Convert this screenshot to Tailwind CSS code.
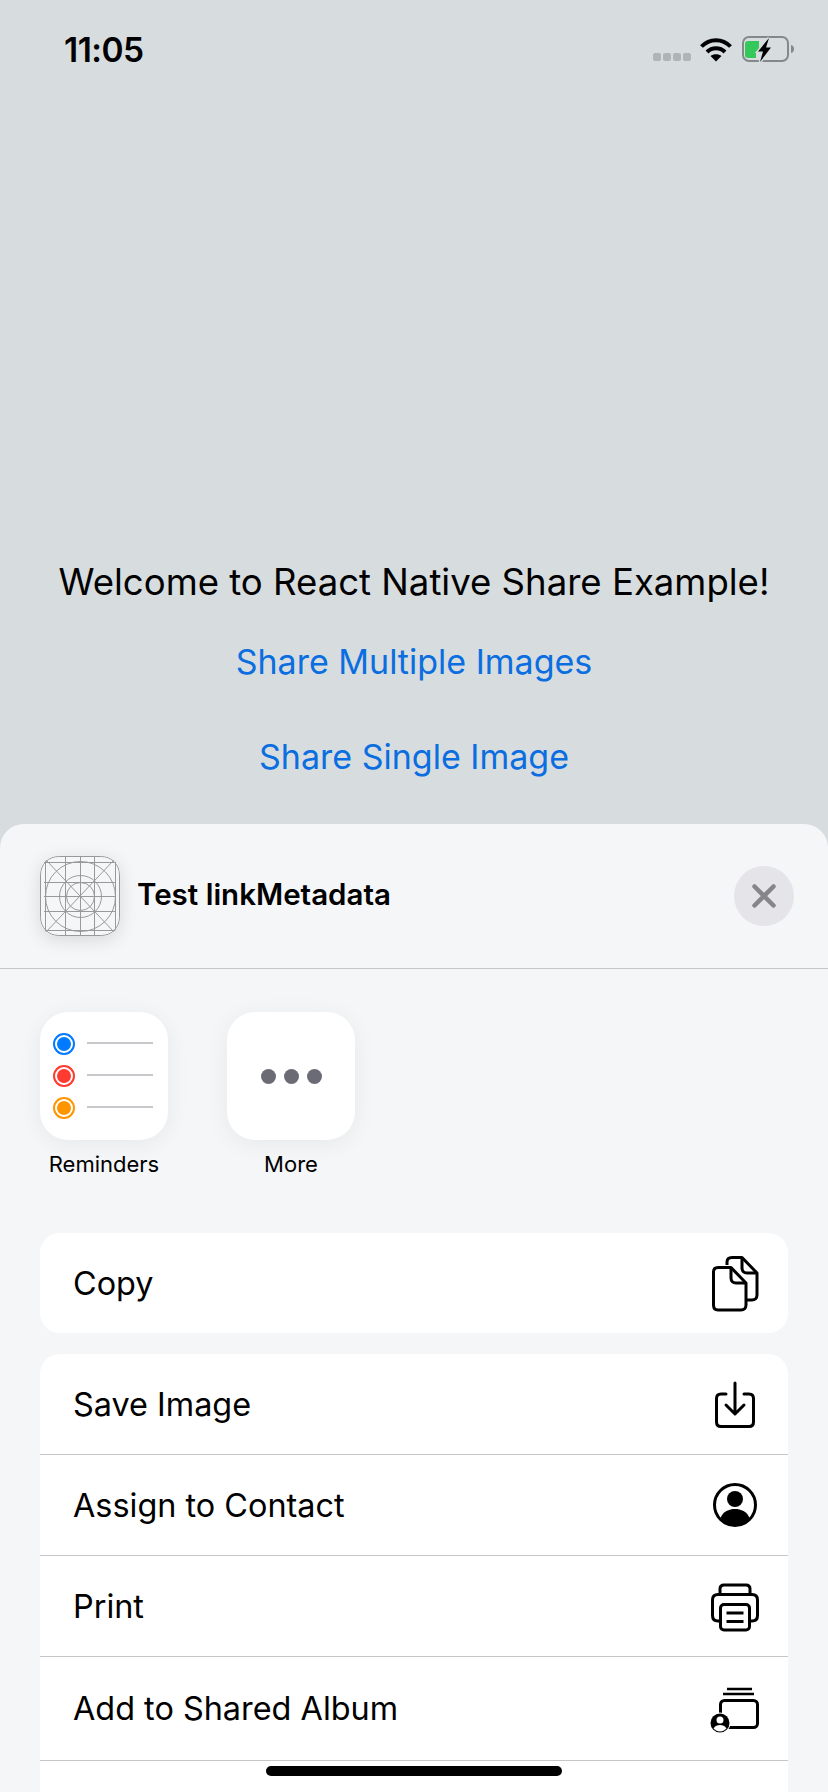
<!doctype html>
<html>
<head>
<meta charset="utf-8">
<meta name="viewport" content="width=device-width, initial-scale=1">
<script src="https://cdn.jsdelivr.net/npm/@tailwindcss/browser@4"></script>
</head>
<body class="m-0">
<div class="relative w-[828px] h-[1792px] overflow-hidden bg-[#d7dcdf] font-['Inter',sans-serif] text-black flex flex-col">

  <!-- status bar -->
  <div class="h-[100px] shrink-0 flex items-start justify-between pt-[30px] pl-[64px] pr-[34px]">
    <span class="text-[33.500px] leading-[40px] font-semibold tracking-[-0.5px]">11:05</span>
    <div class="flex items-start">
      <div class="flex gap-[2px] mt-[23px] mr-[9px]">
        <span class="w-[8px] h-[8px] rounded-[2px] bg-[#afb4b6]"></span>
        <span class="w-[8px] h-[8px] rounded-[2px] bg-[#afb4b6]"></span>
        <span class="w-[8px] h-[8px] rounded-[2px] bg-[#afb4b6]"></span>
        <span class="w-[8px] h-[8px] rounded-[2px] bg-[#afb4b6]"></span>
      </div>
      <svg class="mt-[7px] mr-[10px]" width="32" height="25" viewBox="0 0 32 25" fill="none" stroke="#000" stroke-width="4">
        <path d="M1.500 9.500C9.500 1 22.500 1 30.500 9.500"/>
        <path d="M7 15C12 10 20 10 25 15"/>
        <path d="M16 24.500L10.500 19C13.500 16.500 18.500 16.500 21.500 19Z" fill="#000" stroke="none"/>
      </svg>
      <svg class="mt-[6px]" width="52" height="27" viewBox="0 0 52 27" fill="none">
        <rect x="1" y="1" width="45" height="24" rx="6" stroke="#85888a" stroke-width="2"/>
        <path d="M49 9C51 9.500 52 11 52 13C52 15 51 16.500 49 17Z" fill="#85888a"/>
        <path d="M6 5H17V15L14 16V22H6C4 22 3 21 3 19V8C3 6 4 5 6 5Z" fill="#34c759"/>
        <path d="M27 2L16 15.500H21L18 26L29 11.500H24Z" fill="#d7dcdf" stroke="#d7dcdf" stroke-width="3"/>
        <path d="M27 2L16 15.500H21L18 26L29 11.500H24Z" fill="#000"/>
      </svg>
    </div>
  </div>

  <!-- app content -->
  <div class="flex-1 flex flex-col items-center pt-[459px]">
    <p class="text-[36.550px] leading-[46px] whitespace-nowrap">Welcome to React Native Share Example!</p>
    <p class="mt-[34px] text-[34px] leading-[46px] text-[#0a6ee0]">Share Multiple Images</p>
    <p class="mt-[49px] text-[34px] leading-[46px] text-[#0a6ee0]">Share Single Image</p>
  </div>

  <!-- share sheet -->
  <div class="h-[968px] shrink-0 bg-[#f5f6f8] rounded-t-[24px] flex flex-col">
    <div class="h-[145px] shrink-0 border-b border-[#c6c6c8] flex items-center pl-[40px] pr-[34px] pb-[1px]">
      <svg class="rounded-[18px] shadow-[0_4px_18px_rgba(0,0,0,0.12)]" width="80" height="80" viewBox="0 0 80 80" fill="none" stroke="#999" stroke-width="1">
        <rect x="0.500" y="0.500" width="79" height="79" rx="18" fill="#f5f6f8"/>
        <path d="M6 4L74 76M74 4L6 76M4 6.500H76M4 26.500H76M4 40.500H76M4 55.500H76M4 74.500H76M5.500 4V76M25.500 1V79M40.500 1V79M54.500 1V79M75.500 4V76"/>
        <circle cx="40.500" cy="40.500" r="35"/>
        <circle cx="40.500" cy="40.500" r="21"/>
        <circle cx="40.500" cy="40.500" r="14"/>
      </svg>
      <span class="ml-[17px] mb-[3px] text-[29.500px] leading-[34px] font-semibold">Test linkMetadata</span>
      <button class="ml-auto w-[60px] h-[60px] rounded-full bg-[#e5e5e9] flex items-center justify-center">
        <svg width="26" height="26" viewBox="0 0 26 26" fill="none" stroke="#85858a" stroke-width="4.500" stroke-linecap="round">
          <path d="M3.500 3.500L22.500 22.500M22.500 3.500L3.500 22.500"/>
        </svg>
      </button>
    </div>

    <!-- app row -->
    <div class="flex gap-[59px] pl-[40px] pt-[43px] h-[264px] shrink-0">
      <div class="w-[128px] flex flex-col items-center">
        <svg class="rounded-[28px] bg-white shadow-[0_4px_24px_rgba(0,0,0,0.06)]" width="128" height="128" viewBox="0 0 128 128" fill="none">
          <circle cx="24" cy="32" r="10" stroke="#007aff" stroke-width="2"/><circle cx="24" cy="32" r="7" fill="#007aff"/>
          <circle cx="24" cy="64" r="10" stroke="#ff3b30" stroke-width="2"/><circle cx="24" cy="64" r="7" fill="#ff3b30"/>
          <circle cx="24" cy="96" r="10" stroke="#ff9500" stroke-width="2"/><circle cx="24" cy="96" r="7" fill="#ff9500"/>
          <path d="M47 31H113M47 63H113M47 95H113" stroke="#c7c7cc" stroke-width="2"/>
        </svg>
        <span class="mt-[11px] text-[22px] leading-[26px] whitespace-nowrap">Reminders</span>
      </div>
      <div class="w-[128px] flex flex-col items-center">
        <div class="w-[128px] h-[128px] rounded-[28px] bg-white shadow-[0_4px_24px_rgba(0,0,0,0.06)] flex items-center justify-center gap-[8px]">
          <span class="w-[15px] h-[15px] rounded-full bg-[#6b6b75]"></span>
          <span class="w-[15px] h-[15px] rounded-full bg-[#6b6b75]"></span>
          <span class="w-[15px] h-[15px] rounded-full bg-[#6b6b75]"></span>
        </div>
        <span class="mt-[11px] text-[22px] leading-[26px]">More</span>
      </div>
    </div>

    <!-- actions -->
    <div class="mx-[40px] flex flex-col text-[32.400px]">
      <div class="h-[100px] rounded-[20px] bg-white flex items-center justify-between pl-[33px] pr-[21px]">
        <span class="pt-[2px]">Copy</span>
        <svg width="64" height="64" viewBox="0 0 64 64" fill="none" stroke="#000" stroke-width="3" stroke-linejoin="round">
          <path d="M24 14V11C24 8 26 6.500 29 6.500H39L54 22V44C54 47 52 49 49 49H43"/>
          <path d="M39 6.500V17C39 20 41 22 44 22H54"/>
          <path d="M15 16.500H28L43 32V54C43 57 41 59 38 59H15C12 59 10.500 57 10.500 54V21C10.500 18 12 16.500 15 16.500Z" fill="#fff"/>
          <path d="M28 16.500V27C28 30 30 32 33 32H43"/>
        </svg>
      </div>
      <div class="mt-[21px] rounded-t-[20px] bg-white flex flex-col">
        <div class="h-[101px] border-b border-[#c6c6c8] flex items-center justify-between pl-[33px] pr-[21px]">
          <span class="pt-[2px]">Save Image</span>
          <svg width="64" height="64" viewBox="0 0 64 64" fill="none" stroke="#000" stroke-width="3" stroke-linecap="round" stroke-linejoin="round">
            <path d="M23 22H18C15 22 13.500 23.500 13.500 26.500V50C13.500 53 15 54.500 18 54.500H46C49 54.500 50.500 53 50.500 50V26.500C50.500 23.500 49 22 46 22H41"/>
            <path d="M32 11V42M23 33L32 42L41 33"/>
          </svg>
        </div>
        <div class="h-[101px] border-b border-[#c6c6c8] flex items-center justify-between pl-[33px] pr-[21px]">
          <span class="pt-[2px]">Assign to Contact</span>
          <svg width="64" height="64" viewBox="0 0 64 64" fill="none">
            <circle cx="32" cy="32" r="20.500" stroke="#000" stroke-width="3"/>
            <circle cx="32" cy="26" r="8" fill="#000"/>
            <path d="M17.500 45C20 38.500 26 36 32 36C38 36 44 38.500 46.500 45C43 49.500 38 52 32 52C26 52 21 49.500 17.500 45Z" fill="#000"/>
          </svg>
        </div>
        <div class="h-[101px] border-b border-[#c6c6c8] flex items-center justify-between pl-[33px] pr-[21px]">
          <span class="pt-[2px]">Print</span>
          <svg width="64" height="64" viewBox="0 0 64 64" fill="none" stroke="#000" stroke-width="3" stroke-linecap="round" stroke-linejoin="round">
            <path d="M17 20V15C17 12.500 18.500 11 21 11H43C45.500 11 47 12.500 47 15V20"/>
            <path d="M17 47H15C11.500 47 9.500 45 9.500 41.500V26C9.500 22.500 11.500 20.500 15 20.500H49C52.500 20.500 54.500 22.500 54.500 26V41.500C54.500 45 52.500 47 49 47H47"/>
            <rect x="17.500" y="30.500" width="29" height="25.500" rx="3.500" fill="#fff"/>
            <path d="M23.500 39H40.500M23.500 47.500H40.500" stroke-linecap="butt"/>
          </svg>
        </div>
        <div class="h-[104px] border-b border-[#c6c6c8] flex items-center justify-between pl-[33px] pr-[21px]">
          <span class="pt-[2px]">Add to Shared Album</span>
          <svg width="64" height="64" viewBox="0 0 64 64" fill="none" stroke="#000" stroke-width="3" stroke-linejoin="round">
            <path d="M24 12H49M20 17H51" stroke-width="2.500"/>
            <rect x="17.500" y="23.500" width="37" height="27" rx="4"/>
            <circle cx="17" cy="46" r="10.500" fill="#fff" stroke="none"/>
            <circle cx="17" cy="46" r="9.500" fill="#000" stroke="none"/>
            <circle cx="17" cy="43" r="3.500" fill="#fff" stroke="none"/>
            <path d="M10.500 51.500C12 48.500 14.500 48 17 48C19.500 48 22 48.500 23.500 51.500C21.500 53.500 19.500 54.500 17 54.500C14.500 54.500 12.500 53.500 10.500 51.500Z" fill="#fff" stroke="none"/>
          </svg>
        </div>
        <div class="h-[32px]"></div>
      </div>
    </div>
  </div>

  <!-- home indicator -->
  <div class="absolute left-[266px] bottom-[16px] w-[296px] h-[10px] rounded-full bg-black"></div>
</div>
</body>
</html>
